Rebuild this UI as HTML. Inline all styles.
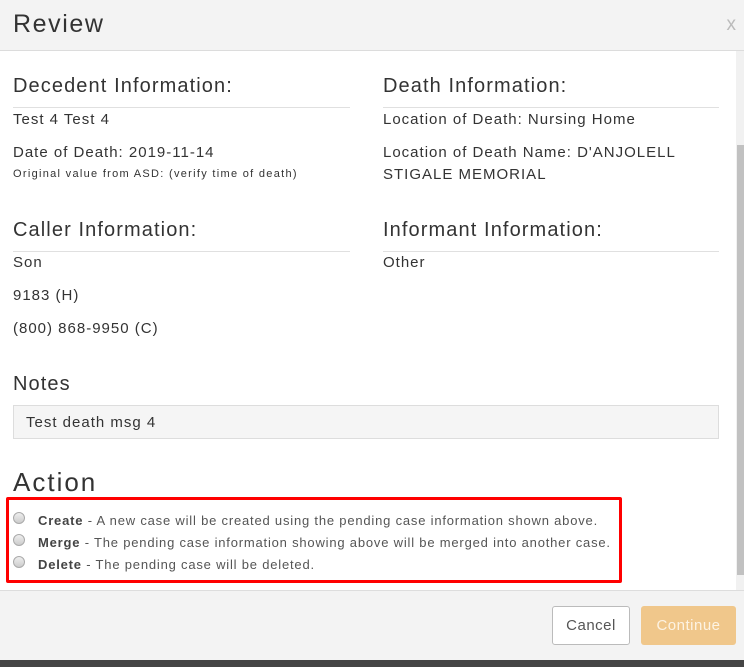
<!DOCTYPE html>
<html><head><style>
*{box-sizing:border-box;margin:0;padding:0}
body{width:744px;height:667px;overflow:hidden;background:#fff;font-family:"Liberation Sans",sans-serif;color:#333;position:relative}
.hdr{position:absolute;left:0;top:0;width:744px;height:51px;background:#f3f3f3;border-bottom:1px solid #dcdcdc}
.hdr h1{position:absolute;left:13px;top:10px;font-weight:normal;font-size:25px;color:#333;letter-spacing:1.6px}
.hdr .x{position:absolute;right:8px;top:14px;font-size:19px;color:#bbb}
.sb{position:absolute;left:736px;top:51px;width:8px;height:539px;background:#f1f1f1}
.thumb{position:absolute;left:737px;top:145px;width:7px;height:430px;background:#c1c1c1}
.t{position:absolute;font-size:15px;color:#333;white-space:nowrap;letter-spacing:1px}
.h{position:absolute;font-size:20px;color:#333;letter-spacing:1.1px}
.ln{position:absolute;height:1px;background:#e0e0e0}
.notes{position:absolute;left:13px;top:405px;width:706px;height:34px;border:1px solid #ddd;background:#f5f5f5;padding:8px 12px;font-size:15px;letter-spacing:1px}
.box{position:absolute;left:6px;top:497px;width:616px;height:86px;border:3px solid #f00;border-radius:2px}
.r{position:absolute;left:13px;width:12px;height:12px;border-radius:50%;border:1px solid #aaa;background:linear-gradient(#eee,#ccc)}
.o{position:absolute;left:38px;font-size:13px;color:#555;white-space:nowrap;letter-spacing:0.8px}
.o b{color:#444}
.ft{position:absolute;left:0;top:590px;width:744px;height:70px;background:#f3f3f3;border-top:1px solid #ddd}
.btn{position:absolute;top:606px;height:39px;border-radius:3px;font-size:15px;text-align:center;line-height:39px;letter-spacing:0.5px}
.bot{position:absolute;left:0;top:660px;width:744px;height:7px;background:#454545}
</style></head><body>
<div class="hdr"><h1>Review</h1><span class="x">x</span></div>
<div class="sb"></div><div class="thumb"></div>
<div class="h" style="left:13px;top:75px">Decedent Information:</div>
<div class="ln" style="left:13px;top:107px;width:337px"></div>
<div class="h" style="left:383px;top:75px">Death Information:</div>
<div class="ln" style="left:383px;top:107px;width:336px"></div>
<div class="t" style="left:13px;top:111px">Test 4 Test 4</div>
<div class="t" style="left:13px;top:144px">Date of Death: 2019-11-14</div>
<div class="t" style="left:13px;top:168px;font-size:11px;letter-spacing:1.3px">Original value from ASD: (verify time of death)</div>
<div class="t" style="left:383px;top:111px">Location of Death: Nursing Home</div>
<div class="t" style="left:383px;top:144px">Location of Death Name: D'ANJOLELL</div>
<div class="t" style="left:383px;top:166px">STIGALE MEMORIAL</div>
<div class="h" style="left:13px;top:219px">Caller Information:</div>
<div class="ln" style="left:13px;top:251px;width:337px"></div>
<div class="h" style="left:383px;top:219px">Informant Information:</div>
<div class="ln" style="left:383px;top:251px;width:336px"></div>
<div class="t" style="left:13px;top:254px">Son</div>
<div class="t" style="left:13px;top:287px">9183 (H)</div>
<div class="t" style="left:13px;top:320px">(800) 868-9950 (C)</div>
<div class="t" style="left:383px;top:254px">Other</div>
<div class="h" style="left:13px;top:373px">Notes</div>
<div class="notes">Test death msg 4</div>
<div class="h" style="left:13px;top:467px;font-size:26px;letter-spacing:2px">Action</div>
<div class="box"></div>
<div class="r" style="top:512px"></div><div class="o" style="top:513px"><b>Create</b> - A new case will be created using the pending case information shown above.</div>
<div class="r" style="top:534px"></div><div class="o" style="top:535px"><b>Merge</b> - The pending case information showing above will be merged into another case.</div>
<div class="r" style="top:556px"></div><div class="o" style="top:557px"><b>Delete</b> - The pending case will be deleted.</div>
<div class="ft"></div>
<div class="btn" style="left:552px;width:78px;background:#fff;border:1px solid #bbb;color:#555;line-height:37px">Cancel</div>
<div class="btn" style="left:641px;width:95px;background:#f0c78b;color:#fdf3e3">Continue</div>
<div class="bot"></div>
</body></html>
